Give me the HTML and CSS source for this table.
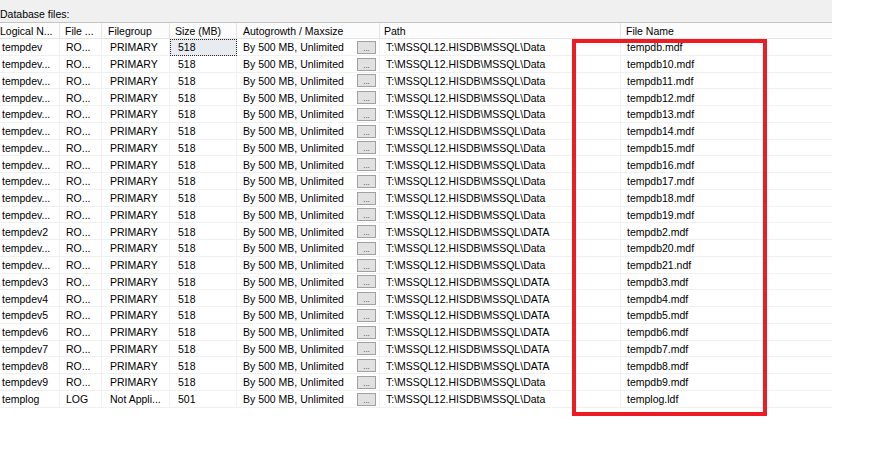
FILE: index.html
```html
<!DOCTYPE html>
<html>
<head>
<meta charset="utf-8">
<link rel="stylesheet" href="styles.css">
</head>
<body>
<div class="panel">
  <div class="caption">Database files:</div>
  <div class="grid">
    <div class="hd">Logical N...</div><div class="hd">File ...</div><div class="hd">Filegroup</div><div class="hd">Size (MB)</div><div class="hd">Autogrowth / Maxsize</div><div class="hd">Path</div><div class="hd">File Name</div>
  </div>
  <div class="grid body" id="rows"></div>
  <div class="highlight"></div>
</div>
<script>
var rows = [
 ["tempdev","RO...","PRIMARY","518","T:\\MSSQL12.HISDB\\MSSQL\\Data","tempdb.mdf"],
 ["tempdev...","RO...","PRIMARY","518","T:\\MSSQL12.HISDB\\MSSQL\\Data","tempdb10.mdf"],
 ["tempdev...","RO...","PRIMARY","518","T:\\MSSQL12.HISDB\\MSSQL\\Data","tempdb11.mdf"],
 ["tempdev...","RO...","PRIMARY","518","T:\\MSSQL12.HISDB\\MSSQL\\Data","tempdb12.mdf"],
 ["tempdev...","RO...","PRIMARY","518","T:\\MSSQL12.HISDB\\MSSQL\\Data","tempdb13.mdf"],
 ["tempdev...","RO...","PRIMARY","518","T:\\MSSQL12.HISDB\\MSSQL\\Data","tempdb14.mdf"],
 ["tempdev...","RO...","PRIMARY","518","T:\\MSSQL12.HISDB\\MSSQL\\Data","tempdb15.mdf"],
 ["tempdev...","RO...","PRIMARY","518","T:\\MSSQL12.HISDB\\MSSQL\\Data","tempdb16.mdf"],
 ["tempdev...","RO...","PRIMARY","518","T:\\MSSQL12.HISDB\\MSSQL\\Data","tempdb17.mdf"],
 ["tempdev...","RO...","PRIMARY","518","T:\\MSSQL12.HISDB\\MSSQL\\Data","tempdb18.mdf"],
 ["tempdev...","RO...","PRIMARY","518","T:\\MSSQL12.HISDB\\MSSQL\\Data","tempdb19.mdf"],
 ["tempdev2","RO...","PRIMARY","518","T:\\MSSQL12.HISDB\\MSSQL\\DATA","tempdb2.mdf"],
 ["tempdev...","RO...","PRIMARY","518","T:\\MSSQL12.HISDB\\MSSQL\\Data","tempdb20.mdf"],
 ["tempdev...","RO...","PRIMARY","518","T:\\MSSQL12.HISDB\\MSSQL\\Data","tempdb21.ndf"],
 ["tempdev3","RO...","PRIMARY","518","T:\\MSSQL12.HISDB\\MSSQL\\DATA","tempdb3.mdf"],
 ["tempdev4","RO...","PRIMARY","518","T:\\MSSQL12.HISDB\\MSSQL\\DATA","tempdb4.mdf"],
 ["tempdev5","RO...","PRIMARY","518","T:\\MSSQL12.HISDB\\MSSQL\\DATA","tempdb5.mdf"],
 ["tempdev6","RO...","PRIMARY","518","T:\\MSSQL12.HISDB\\MSSQL\\DATA","tempdb6.mdf"],
 ["tempdev7","RO...","PRIMARY","518","T:\\MSSQL12.HISDB\\MSSQL\\DATA","tempdb7.mdf"],
 ["tempdev8","RO...","PRIMARY","518","T:\\MSSQL12.HISDB\\MSSQL\\DATA","tempdb8.mdf"],
 ["tempdev9","RO...","PRIMARY","518","T:\\MSSQL12.HISDB\\MSSQL\\Data","tempdb9.mdf"],
 ["templog","LOG","Not Appli...","501","T:\\MSSQL12.HISDB\\MSSQL\\Data","templog.ldf"]
];
var c = document.getElementById("rows");
var html = "";
rows.forEach(function(r, i){
  html += '<div class="cd c1">'+r[0]+'</div>' +
          '<div class="cd c2">'+r[1]+'</div>' +
          '<div class="cd c3">'+r[2]+'</div>' +
          '<div class="cd c4'+(i===0?' focus':'')+'">'+r[3]+'</div>' +
          '<div class="cd c5"><span>By 500 MB, Unlimited</span><span class="btn">...</span></div>' +
          '<div class="cd c6">'+r[4]+'</div>' +
          '<div class="cd c7">'+r[5]+'</div>';
});
c.innerHTML = html;
</script>
</body>
</html>
```
FILE: styles.css
```css
html, body {
  margin: 0;
  padding: 0;
  background: #ffffff;
}
body {
  font-family: "Liberation Sans", Arial, sans-serif;
  font-size: 10.5px;
  color: #000;
}
.panel {
  position: relative;
  width: 832px;
  padding-bottom: 20px;
}
.caption {
  height: 23px;
  box-sizing: border-box;
  background: #f0f0f0;
  border-bottom: 1px solid #c4c4c4;
  padding-top: 8px;
  line-height: 12px;
  overflow: hidden;
}
.grid {
  display: grid;
  grid-template-columns: 60px 42px 68px 67px 143px 241px 211px;
}
.hd {
  height: 16px;
  box-sizing: border-box;
  background: #fcfcfc;
  border-right: 1px solid #e5e5e5;
  border-bottom: 1px solid #e5e5e5;
  line-height: 16px;
  padding-left: 5px;
  white-space: nowrap;
  overflow: hidden;
}
.hd:first-child { padding-left: 0; }
.hd:nth-child(2) { padding-left: 5px; }
.hd:nth-child(3) { padding-left: 6px; }
.hd:nth-child(4) { padding-left: 5px; }
.hd:nth-child(5) { padding-left: 6px; }
.hd:nth-child(6) { padding-left: 4px; }
.hd:nth-child(7) { padding-left: 5px; border-right: none; }
.body {
  grid-auto-rows: 16.76px;
}
.cd {
  box-sizing: border-box;
  border-right: 1px solid #f0f0f0;
  border-bottom: 1px solid #f0f0f0;
  line-height: 16px;
  padding-top: 1px;
  white-space: nowrap;
  overflow: hidden;
  display: flex;
  align-items: center;
}
.c1 { padding-left: 2px; }
.c2 { padding-left: 6px; }
.c3 { padding-left: 8px; }
.c4 { padding-left: 8px; }
.c5 { padding-left: 6px; padding-right: 3px; }
.c6 { padding-left: 6px; }
.c7 { padding-left: 6px; border-right: none; }
.focus {
  background: #e8ecf0;
  outline: 1px dotted #222;
  outline-offset: -1px;
}
.btn {
  margin-left: auto;
  width: 19px;
  height: 13px;
  box-sizing: border-box;
  border: 1px solid #a0a0a0;
  background: #e1e1e1;
  font-size: 8px;
  line-height: 13px;
  text-align: center;
  color: #333;
}
.highlight {
  position: absolute;
  left: 572px;
  top: 39px;
  width: 195px;
  height: 377px;
  box-sizing: border-box;
  border: 4px solid #ed1c24;
}
```
